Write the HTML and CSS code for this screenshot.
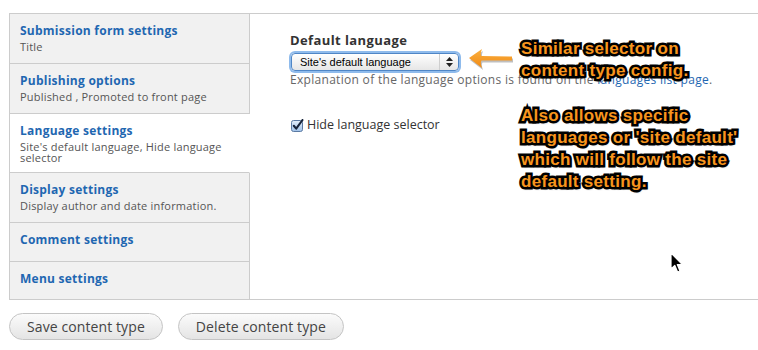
FILE: index.html
```html
<!DOCTYPE html>
<html>
<head>
<meta charset="utf-8">
<link rel="stylesheet" href="styles.css">
</head>
<body>
<div class="page">
  <div class="vtabs">
    <ul class="tabs">
      <li class="tab"><a class="tab-title">Submission form settings</a><span class="tab-desc">Title</span></li>
      <li class="tab"><a class="tab-title">Publishing options</a><span class="tab-desc">Published , Promoted to front page</span></li>
      <li class="tab tab-active"><a class="tab-title">Language settings</a><span class="tab-desc">Site's default language, Hide language selector</span></li>
      <li class="tab"><a class="tab-title">Display settings</a><span class="tab-desc">Display author and date information.</span></li>
      <li class="tab"><a class="tab-title">Comment settings</a><span class="tab-desc"></span></li>
      <li class="tab tab-last"><a class="tab-title">Menu settings</a><span class="tab-desc"></span></li>
    </ul>
    <div class="pane">
      <div class="field-label">Default language</div>
      <div class="select">
        <span class="select-text">Site's default language</span>
        <span class="select-arrows">
          <svg width="7" height="10" viewBox="0 0 7 10"><path d="M3.5 0 L7 4 L0 4 Z M3.5 10 L7 6 L0 6 Z" fill="#222"/></svg>
        </span>
      </div>
      <div class="field-desc">Explanation of the language options is found on the <a class="link">languages list page</a>.</div>
      <div class="check-row">
        <svg class="checkbox" width="13" height="13" viewBox="0 0 13 13">
          <defs><linearGradient id="cb" x1="0" y1="0" x2="0" y2="1"><stop offset="0" stop-color="#e3eefb"/><stop offset="1" stop-color="#9fc1e8"/></linearGradient></defs>
          <rect x="0.5" y="1.5" width="11" height="11" rx="2" fill="url(#cb)" stroke="#5b7aa3"/>
          <path d="M2.8 6.8 L5.2 9.6 L11.5 1" fill="none" stroke="#16233a" stroke-width="2.1" stroke-linecap="round" stroke-linejoin="round"/>
        </svg>
        <span class="check-label">Hide language selector</span>
      </div>
    </div>
  </div>
  <div class="actions">
    <button class="btn">Save content type</button>
    <button class="btn">Delete content type</button>
  </div>

  <svg class="callout-arrow" width="50" height="26" viewBox="0 0 50 26">
    <defs><linearGradient id="ar" x1="0" y1="0" x2="0" y2="1"><stop offset="0" stop-color="#fbb040"/><stop offset="1" stop-color="#f08a14"/></linearGradient></defs>
    <path d="M3 11 L16 2 Q14 7 15.5 9 L46 9.5 L46 13.5 L15.5 13.5 Q14 16 16 21 Z" fill="rgba(0,0,0,0.25)" transform="translate(1,2)"/>
    <path d="M3 11 L16 2 Q14 7 15.5 9 L46 9.5 L46 13.5 L15.5 13.5 Q14 16 16 21 Z" fill="url(#ar)"/>
  </svg>
  <div class="note note-1">Similar selector on<br>content type config.</div>
  <div class="note note-2">Also allows specific<br>languages or 'site default'<br>which will follow the site<br>default setting.</div>
  <svg class="cursor" width="14" height="22" viewBox="0 0 14 22">
    <path d="M1 1 L1 17 L4.8 13.4 L7.6 20 L10 19 L7.3 12.6 L12.4 12.6 Z" fill="#000" stroke="#fff" stroke-width="1.2" stroke-linejoin="round"/>
  </svg>
</div>
</body>
</html>
```
FILE: styles.css
```css
html, body {
  margin: 0;
  padding: 0;
  background: #fff;
  overflow: hidden;
}
body {
  font-family: "Open Sans", "DejaVu Sans", sans-serif;
  color: #333;
}
.page {
  position: relative;
  width: 758px;
  height: 350px;
  padding: 13px 0 0 9px;
  box-sizing: border-box;
  overflow: hidden;
}
.vtabs {
  display: flex;
  width: 770px;
  border-top: 1px solid #ccc;
  border-bottom: 1px solid #ccc;
  border-left: 1px solid #ccc;
}
.tabs {
  list-style: none;
  margin: 0;
  padding: 0;
  width: 240px;
  flex: none;
}
.tab {
  display: flex;
  flex-direction: column;
  box-sizing: border-box;
  padding: 9px 11px 11px 10px;
  background: #f1f1f1;
  border-right: 1px solid #ccc;
  border-bottom: 1px solid #ccc;
}
.tab-last {
  border-bottom: none;
  padding-bottom: 10px;
}
.tab-active {
  background: #fff;
  border-right-color: #fff;
  padding-bottom: 9px;
}
.tab-title {
  font-weight: 700;
  font-size: 12px;
  letter-spacing: 0.25px;
  line-height: 16px;
  color: #1f67b1;
}
.tab-desc {
  margin-top: 2px;
  font-size: 11px;
  letter-spacing: 0.2px;
  line-height: 11px;
  color: #555;
}
.pane {
  flex: 1;
  padding: 18px 0 0 40px;
}
.field-label {
  font-weight: 700;
  font-size: 13px;
  letter-spacing: 0.4px;
  line-height: 16px;
  color: #333;
}
.select {
  display: flex;
  width: 168px;
  height: 18px;
  box-sizing: border-box;
  margin: 5px 0 0 1px;
  border: 1px solid #4f86c6;
  border-radius: 4px;
  box-shadow: 0 0 0 2px #8fbbec;
  background: linear-gradient(#ffffff, #e6e6e6);
  font-family: "Liberation Sans", Arial, sans-serif;
  font-size: 11px;
  color: #000;
  align-items: center;
}
.select-text {
  flex: 1;
  padding-left: 8px;
  line-height: 16px;
}
.select-arrows {
  width: 18px;
  height: 16px;
  display: flex;
  align-items: center;
  justify-content: center;
  border-left: 1px solid #cfcfcf;
}
.field-desc {
  margin-top: 0;
  font-size: 12px;
  letter-spacing: 0.3px;
  line-height: 17px;
  color: #666;
}
.link {
  color: #1f67b1;
}
.check-row {
  display: flex;
  align-items: center;
  margin-top: 29px;
  margin-left: 1px;
  gap: 3px;
}
.checkbox {
  display: block;
  flex: none;
}
.check-label {
  font-size: 12.5px;
  line-height: 16px;
  color: #333;
}
.actions {
  display: flex;
  gap: 15px;
  margin-top: 13px;
}
.btn {
  height: 27px;
  padding: 0 17px;
  border: 1px solid #c4c4c4;
  border-radius: 14px;
  background: linear-gradient(#fbfbfb, #e4e4e4);
  font-family: "Open Sans", "DejaVu Sans", sans-serif;
  font-size: 14px;
  letter-spacing: 0.1px;
  color: #444;
}
.callout-arrow {
  position: absolute;
  left: 466px;
  top: 47px;
}
.note {
  position: absolute;
  left: 521px;
  font-family: "Liberation Sans", Arial, sans-serif;
  font-weight: 700;
  font-size: 17px;
  line-height: 22px;
  letter-spacing: 0.3px;
  color: #f8951d;
  -webkit-text-stroke: 5px #000;
  paint-order: stroke fill;
  text-shadow: 1px 2px 2px rgba(0, 0, 0, 0.55);
  white-space: nowrap;
}
.note-1 {
  top: 38px;
}
.note-2 {
  top: 105px;
}
.cursor {
  position: absolute;
  left: 670px;
  top: 252px;
}
```
